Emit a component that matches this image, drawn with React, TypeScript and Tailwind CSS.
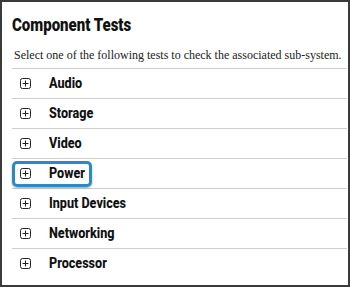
const TESTS = ["Audio", "Storage", "Video", "Power", "Input Devices", "Networking", "Processor"];

function PlusBox() {
  return (
    <svg width="11" height="11" viewBox="0 0 11 11" className="shrink-0">
      <rect x="0.5" y="0.5" width="10" height="10" rx="2" fill="none" stroke="#222" strokeWidth="1" />
      <path d="M5.5 2.5v6M2.5 5.5h6" stroke="#222" strokeWidth="1" />
    </svg>
  );
}

function Label({ text }: { text: string }) {
  return (
    <span className="inline-block origin-left scale-x-[0.9] text-[14px] font-extrabold text-[#111] font-['Roboto',sans-serif]">
      {text}
    </span>
  );
}

export default function App() {
  return (
    <div className="w-[350px] h-[287px] bg-white border-2 border-[#3a3a3a] overflow-hidden">
      <div className="pl-[10px] pr-[1px]">
        <h1 className="pt-[12px] text-[19px] leading-[22px] font-black text-[#111] font-['Roboto',sans-serif]">
          <span className="inline-block origin-left scale-x-[0.79]">Component Tests</span>
        </h1>
        <p className="mt-[12px] pl-[2px] text-[12px] leading-[14px] text-[#222] font-['Liberation_Serif',serif] whitespace-nowrap">
          Select one of the following tests to check the associated sub-system.
        </p>
        <div className="mt-[6px]">
          {TESTS.map((t) => (
            <div key={t} className="h-[30px] border-t border-[#cfcfcf] flex items-center">
              {t === "Power" ? (
                <div className="h-[26px] w-[80px] flex items-center gap-[18px] pl-[5px] border-[3px] border-[#2a8ac4] rounded-[5px] shadow-[0_1px_2px_rgba(0,0,0,0.35)]">
                  <PlusBox />
                  <Label text={t} />
                </div>
              ) : (
                <div className="flex items-center gap-[18px] pl-[8px]">
                  <PlusBox />
                  <Label text={t} />
                </div>
              )}
            </div>
          ))}
        </div>
      </div>
    </div>
  );
}
